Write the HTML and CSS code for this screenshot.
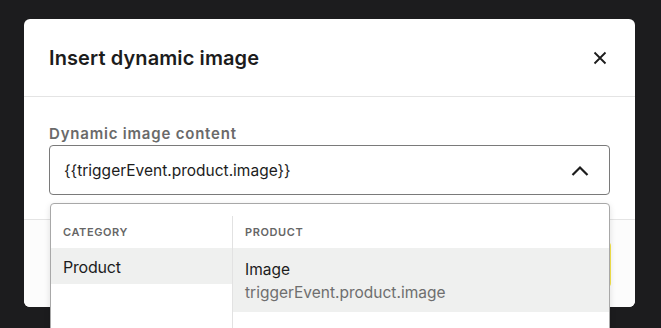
FILE: index.html
```html
<!DOCTYPE html>
<html lang="en">

<head>
    <meta charset="UTF-8">
    <meta name="viewport" content="width=device-width, initial-scale=1.0">
    <title>Insert dynamic image</title>
    <link rel="stylesheet" href="styles.css">
</head>

<body>
    <div class="backdrop">
        <div class="modal">
            <div class="modal-header">
                <h2>Insert dynamic image</h2>
                <button class="close-btn" aria-label="Close">
                    <svg width="16" height="16" viewBox="0 0 16 16">
                        <path d="M2.5 2.5 L13.5 13.5 M13.5 2.5 L2.5 13.5" stroke="#1c1c1c" stroke-width="1.8" fill="none" />
                    </svg>
                </button>
            </div>
            <div class="modal-body">
                <label class="field-label">Dynamic image content</label>
                <div class="field">
                    <div class="select-box">
                        <span>{{triggerEvent.product.image}}</span>
                        <svg width="20" height="12" viewBox="0 0 20 12">
                            <path d="M2.5 10 L10 2.5 L17.5 10" stroke="#1c1c1c" stroke-width="2.2" fill="none" />
                        </svg>
                    </div>
                    <!-- menu sits on top of the footer -->
                    <div class="dropdown">
                        <div class="col col-category">
                            <div class="col-title">Category</div>
                            <div class="option selected">Product</div>
                        </div>
                        <div class="col col-product">
                            <div class="col-title">Product</div>
                            <div class="option selected">
                                <div class="opt-name">Image</div>
                                <div class="opt-path">triggerEvent.product.image</div>
                            </div>
                        </div>
                    </div>
                </div>
            </div>
            <div class="modal-footer">
                <button class="insert-btn">Insert</button>
            </div>
        </div>
    </div>
</body>

</html>
```

FILE: styles.css
```css
body {
    margin: 0;
    background-color: #1c1c1e;
    font-family: Inter, Lato, sans-serif;
    color: #1c1c1c;
    height: 328px;
    overflow: hidden;
}

.backdrop {
    padding: 19px 26px 0 24px;
}

.modal {
    background-color: #fff;
    border-radius: 6px;
    width: 611px;
    height: 288px;
    display: flex;
    flex-direction: column;
}

.modal-header {
    height: 76px;
    display: flex;
    align-items: center;
    justify-content: space-between;
    padding: 1px 25px 0;
    border-bottom: 1px solid #e4e4e4;
}

.modal-header h2 {
    margin: 0;
    font-size: 20px;
    font-weight: 600;
    letter-spacing: 0.1px;
}

.close-btn {
    border: 0;
    background: none;
    padding: 0;
    width: 18px;
    height: 18px;
    margin-right: 1px;
    display: flex;
    align-items: center;
    justify-content: center;
}

.modal-body {
    padding: 26px 25px 24px;
}

.field-label {
    display: block;
    font-size: 15px;
    font-weight: 600;
    color: #6a6a6a;
    line-height: 22px;
    letter-spacing: 0.8px;
}

.field {
    position: relative;
}

.select-box {
    height: 47px;
    border: 1px solid #7a7a7a;
    border-radius: 4px;
    display: flex;
    align-items: center;
    justify-content: space-between;
    padding: 1px 19px 0 14px;
    font-size: 15.5px;
}

.dropdown {
    position: absolute;
    top: 58px;
    left: 1px;
    width: 558px;
    height: 140px;
    background-color: #fff;
    border: 1px solid #a8a8a8;
    border-radius: 4px;
    box-shadow: 0 2px 6px rgba(0, 0, 0, 0.12);
    display: flex;
    padding-top: 12px;
    z-index: 2;
}

.col {
    display: flex;
    flex-direction: column;
}

.col-category {
    width: 181px;
    border-right: 1px solid #e2e2e2;
}

.col-product {
    flex-grow: 1;
}

.col-title {
    font-size: 11px;
    font-weight: 600;
    letter-spacing: 0.6px;
    text-transform: uppercase;
    color: #666;
    padding: 9px 12px 0;
    height: 23px;
}

.option {
    padding: 0 12px;
    font-size: 16px;
    letter-spacing: -0.2px;
}

.option.selected {
    background-color: #eff0ef;
}

.col-category .option {
    height: 36px;
    line-height: 38px;
}

.col-product .option {
    height: 64px;
    padding-top: 11px;
    box-sizing: border-box;
    letter-spacing: 0;
}

.opt-name {
    font-size: 15.5px;
    line-height: 22px;
}

.opt-path {
    font-size: 15.5px;
    color: #6e6e6e;
    line-height: 24px;
}

.modal-footer {
    border-top: 1px solid #e4e4e4;
    flex-grow: 1;
    display: flex;
    justify-content: flex-end;
    align-items: center;
    padding: 0 24px;
    background-color: #fcfcfc;
    border-radius: 0 0 6px 6px;
}

.insert-btn {
    background-color: #f6e54b;
    border: 0;
    border-radius: 4px;
    height: 45px;
    width: 90px;
    margin-top: 2px;
    font-family: inherit;
    font-weight: 600;
    font-size: 15px;
}
```
